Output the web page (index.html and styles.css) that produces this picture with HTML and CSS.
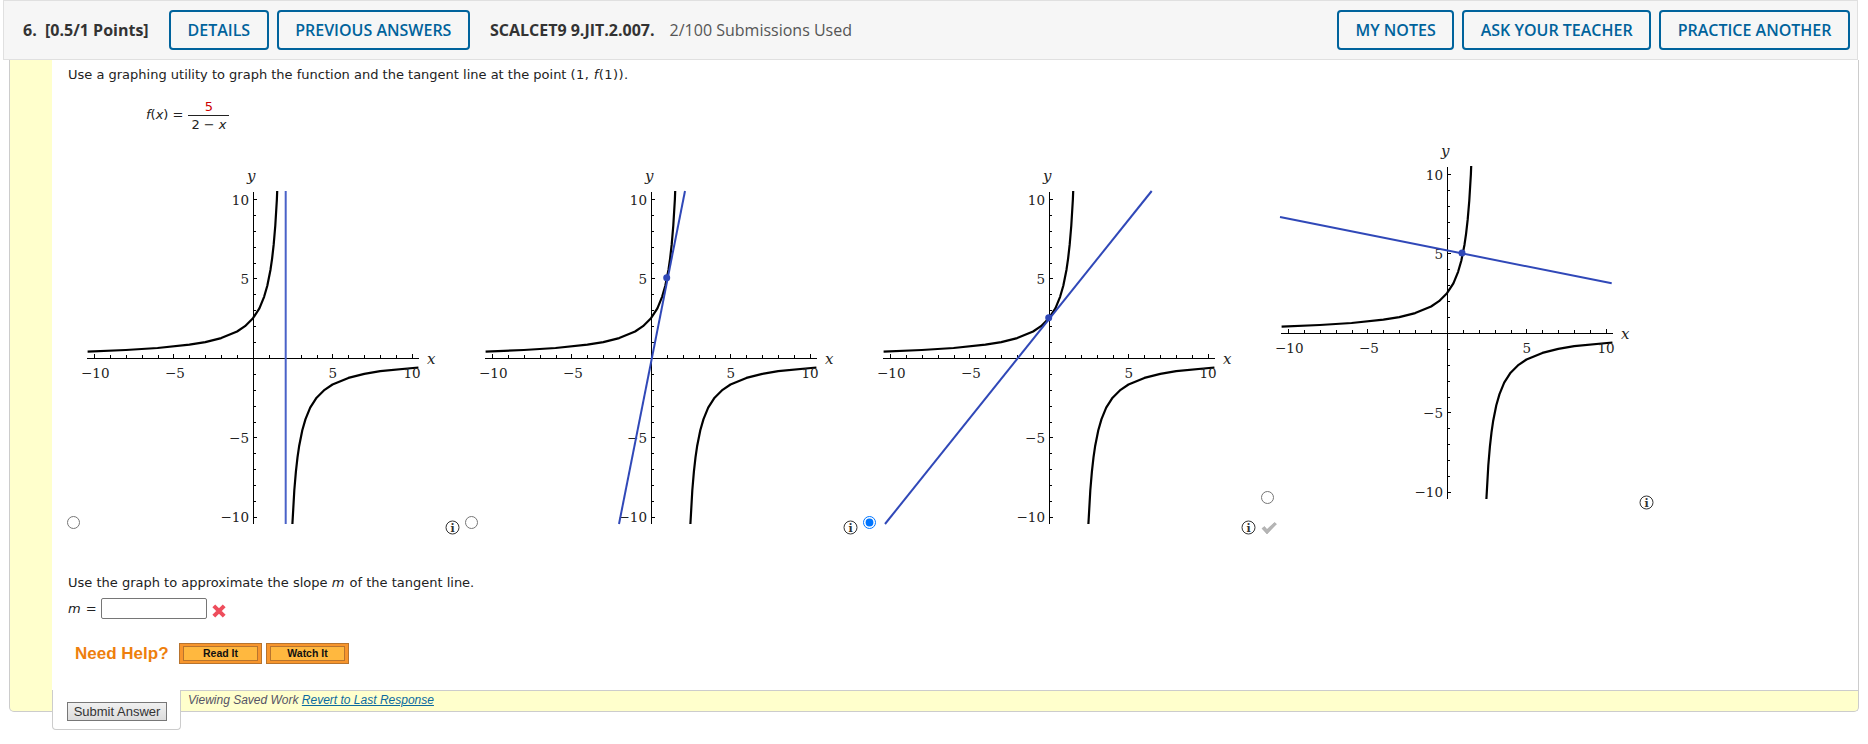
FILE: index.html
```html
<!DOCTYPE html>
<html lang="en">
<head>
    <meta charset="UTF-8">
    <meta name="viewport" content="width=device-width, initial-scale=1.0">
    <title>Question 6</title>
    <link rel="stylesheet" href="styles.css">
</head>
<body>
    <!-- shared plot: axes, tick labels and the curve -->
    <svg class="defs" width="0" height="0">
        <defs>
            <g id="plot">
                <path class="axis" d="M7 188.5H339M173.5 22V354"/>
                <path class="axis" d="M14.5 188v-4M93.5 188v-4M252.5 188v-4M332.5 188v-4M173 29.5h4M173 108.5h4M173 267.5h4M173 347.5h4"/>
                <path class="axis" d="M30.5 188v-3M46.5 188v-3M62.5 188v-3M78.5 188v-3M109.5 188v-3M125.5 188v-3M141.5 188v-3M157.5 188v-3M189.5 188v-3M205.5 188v-3M221.5 188v-3M237.5 188v-3M268.5 188v-3M284.5 188v-3M300.5 188v-3M316.5 188v-3"/>
                <path class="axis" d="M173 45.5h3M173 61.5h3M173 77.5h3M173 93.5h3M173 124.5h3M173 140.5h3M173 156.5h3M173 172.5h3M173 204.5h3M173 220.5h3M173 236.5h3M173 252.5h3M173 283.5h3M173 299.5h3M173 315.5h3M173 331.5h3"/>
                <path class="curve" d="M7.6 181.6L45.8 180L77.6 178L109.4 174.7L125.3 172.1L141.2 168.1L157.1 161.5L165 156.2L173 148.2L179.4 138.3L184.1 126.8L187.3 115.7L190.5 99.7L192.1 88.6L193.7 74.4L195.3 55.5L196.9 29L197.2 21"/>
                <path class="curve" d="M212.4 354L212.8 347L214.3 320.5L215.9 301.6L217.5 287.4L219.1 276.3L222.3 260.3L225.5 249.1L230.2 237.7L236.6 227.7L244.6 219.8L252.5 214.5L268.4 207.9L284.3 203.9L300.2 201.2L338.4 197.5"/>
                <text class="tick" x="1" y="208">−10</text>
                <text class="tick" x="85" y="208">−5</text>
                <text class="tick" x="248.5" y="208">5</text>
                <text class="tick" x="323.5" y="208">10</text>
                <text class="tick end" x="169" y="35">10</text>
                <text class="tick end" x="169" y="113.5">5</text>
                <text class="tick end" x="169" y="272.5">−5</text>
                <text class="tick end" x="169" y="352">−10</text>
                <text class="var" x="167" y="11">y</text>
                <text class="var" x="347" y="194">x</text>
            </g>
            <g id="info">
                <circle class="info-ring" cx="7.5" cy="7.5" r="6.5"/>
                <text class="info-i" x="7.5" y="12">i</text>
            </g>
        </defs>
    </svg>

    <div class="header">
        <span class="points">6.&nbsp; [0.5/1 Points]</span>
        <a class="btn btn-first">DETAILS</a>
        <a class="btn">PREVIOUS ANSWERS</a>
        <span class="code">SCALCET9 9.JIT.2.007.</span>
        <span class="used">2/100 Submissions Used</span>
        <div class="header-right">
            <a class="btn">MY NOTES</a>
            <a class="btn">ASK YOUR TEACHER</a>
            <a class="btn">PRACTICE ANOTHER</a>
        </div>
    </div>

    <div class="panel">
        <div class="question">
            <p class="prompt">Use a graphing utility to graph the function and the tangent line at the point <span class="coord">(1, <i>f</i>(1))</span>.</p>
            <div class="formula">
                <span class="fx"><i>f</i>(<i>x</i>) =</span>
                <span class="frac">
                    <span class="num">5</span>
                    <span class="den">2 − <i>x</i></span>
                </span>
            </div>

            <div class="choices">
                <label class="option">
                    <input type="radio" name="graph">
                    <svg class="graph" width="365" height="356" viewBox="0 0 365 356">
                        <use href="#plot"/>
                        <path class="tangent tangent-vert" d="M205.7 21V354"/>
                    </svg>
                    <svg class="info" width="15" height="15"><use href="#info"/></svg>
                </label>
                <label class="option">
                    <input type="radio" name="graph">
                    <svg class="graph" width="365" height="356" viewBox="0 0 365 356">
                        <use href="#plot"/>
                        <path class="tangent" d="M207 21L141 354"/>
                        <circle class="dot" cx="188.7" cy="107.7" r="3.5"/>
                    </svg>
                    <svg class="info" width="15" height="15"><use href="#info"/></svg>
                </label>
                <label class="option">
                    <input type="radio" name="graph" checked>
                    <svg class="graph" width="365" height="356" viewBox="0 0 365 356">
                        <use href="#plot"/>
                        <path class="tangent" d="M275.7 21L9 354"/>
                        <circle class="dot" cx="172.7" cy="147.7" r="3.5"/>
                    </svg>
                    <svg class="info" width="15" height="15"><use href="#info"/></svg>
                    <svg class="check" width="16" height="14" viewBox="0 0 16 14"><path d="M1 7.5L3.5 5.5L6 8.5L13.5 1.5L15.5 3L6 13Z"/></svg>
                </label>
                <label class="option option-raised">
                    <input type="radio" name="graph">
                    <svg class="graph" width="365" height="356" viewBox="0 0 365 356">
                        <use href="#plot"/>
                        <path class="tangent" d="M6 72L337.7 138.3"/>
                        <circle class="dot" cx="188" cy="108" r="3.5"/>
                    </svg>
                    <svg class="info" width="15" height="15"><use href="#info"/></svg>
                </label>
            </div>

            <p class="slope">Use the graph to approximate the slope <i class="var-m">m</i> of the tangent line.</p>
            <div class="answer">
                <span><i class="var-m">m</i> =</span>
                <input class="answer-box" type="text">
                <svg class="wrong" width="16" height="16" viewBox="0 0 16 16"><path d="M2.8 2.8L13.2 13.2M13.2 2.8L2.8 13.2"/></svg>
            </div>

            <div class="help">
                <span class="help-title">Need Help?</span>
                <a class="help-btn"><span>Read It</span></a>
                <a class="help-btn"><span>Watch It</span></a>
            </div>
        </div>

        <div class="footer">
            <div class="submit-card">
                <button class="submit">Submit Answer</button>
            </div>
            <div class="saved">Viewing Saved Work <a href="#">Revert to Last Response</a></div>
        </div>
    </div>
</body>
</html>
```

FILE: styles.css
```css
body {
    box-sizing: border-box;
    min-height: 744px;
    margin: 0;
    background: white;
    font-family: "DejaVu Sans", sans-serif;
    font-size: 13px;
    color: #222;
}
p {
    margin: 0;
}
.defs {
    position: absolute;
}

.header {
    display: flex;
    align-items: center;
    box-sizing: border-box;
    height: 60px;
    width: 1855px;
    margin-left: 3px;
    padding: 0 7px 0 19px;
    background: #f6f6f6;
    border: 1px solid #e0e0e0;
    font-family: "Open Sans", sans-serif;
    font-size: 16px;
}
.points {
    font-weight: 700;
    font-size: 16px;
    color: #333;
    width: 146px;
    white-space: nowrap;
}
.btn {
    box-sizing: border-box;
    height: 40px;
    line-height: 36px;
    padding: 0 16.5px;
    margin-right: 8px;
    border: 2px solid #00639c;
    border-radius: 4px;
    color: #00639c;
    font-weight: 600;
    white-space: nowrap;
}
.code {
    margin-left: 12px;
    font-weight: 700;
    color: #333;
}
.used {
    margin-left: 15px;
    color: #555;
}
.header-right {
    display: flex;
    margin-left: auto;
}
.header-right .btn:last-child {
    margin-right: 0;
}

.panel {
    box-sizing: border-box;
    width: 1850px;
    height: 652px;
    margin-left: 9px;
    background: #ffffcc;
    border: 1px solid #ccc;
    border-top: 0;
    border-radius: 0 0 5px 5px;
}
.question {
    box-sizing: border-box;
    height: 630px;
    margin-left: 42px;
    padding: 7px 0 0 16px;
    background: white;
}
.coord {
    letter-spacing: 0.4px;
}
.formula {
    display: flex;
    align-items: center;
    margin: 17px 0 0 78px;
    gap: 5px;
}
.fx {
    margin-top: -3px;
}
.frac {
    display: flex;
    flex-direction: column;
    align-items: center;
    width: 41px;
}
.num {
    color: #c00;
    padding-bottom: 1px;
}
.den {
    border-top: 1px solid #222;
    width: 100%;
    text-align: center;
    padding-top: 1px;
}

.choices {
    display: flex;
    margin-left: -1px;
    margin-top: 38px;
}
.option {
    display: flex;
    align-items: flex-end;
    position: relative;
    width: 398px;
    height: 366px;
}
.option input {
    margin: 0 0 7px 0;
}
.option-raised {
    margin-top: -25px;
}
.graph {
    margin-bottom: 10px;
}
.info {
    margin-bottom: 1px;
}
.info-ring {
    fill: white;
    stroke: #333;
}
.info-i {
    font-family: "DejaVu Serif", serif;
    font-size: 11px;
    font-weight: 700;
    text-anchor: middle;
    fill: #333;
}
.check {
    position: absolute;
    left: 398px;
    bottom: 1px;
    fill: #b5b5b5;
    stroke: #999;
    stroke-width: 0.5;
}

.axis {
    fill: none;
    stroke: #000;
    stroke-width: 1;
}
.curve {
    fill: none;
    stroke: #000;
    stroke-width: 2.2;
    stroke-linejoin: round;
}
.tangent {
    fill: none;
    stroke: #3048b8;
    stroke-width: 2;
}
.tangent-vert {
    stroke: #4a62c8;
}
.dot {
    fill: #3048b8;
}
.tick {
    font-family: "DejaVu Serif", serif;
    font-size: 13.5px;
    fill: #222;
}
.end {
    text-anchor: end;
}
.var {
    font-family: "DejaVu Serif", serif;
    font-size: 15px;
    font-style: italic;
    fill: #222;
}

.slope {
    margin-top: 39px;
}
.var-m {
    letter-spacing: 1px;
}
.answer {
    display: flex;
    align-items: center;
    gap: 4px;
    margin-top: 8px;
}
.answer-box {
    box-sizing: border-box;
    width: 106px;
    height: 21px;
    margin: 0;
    padding: 0;
    border: 1px solid #767676;
    border-radius: 2px;
}
.wrong {
    margin-top: 4px;
    fill: none;
    stroke: #ee4d5c;
    stroke-width: 4;
}

.help {
    display: flex;
    align-items: center;
    gap: 4px;
    margin: 24px 0 0 7px;
}
.help-title {
    width: 100px;
    font-family: "Liberation Sans", sans-serif;
    font-size: 17px;
    font-weight: 700;
    color: #ee7f0d;
}
.help-btn {
    box-sizing: border-box;
    width: 83px;
    height: 21px;
    padding: 3px;
    background: #f7952c;
    border: 1px solid #b8742e;
}
.help-btn span {
    display: block;
    height: 13px;
    line-height: 13px;
    background: #ffb83f;
    border: 1px solid #b8742e;
    margin-top: -1px;
    text-align: center;
    font-family: "Liberation Sans", sans-serif;
    font-size: 10.5px;
    font-weight: 700;
    color: #111;
}

.footer {
    display: flex;
    margin-left: 42px;
}
.submit-card {
    box-sizing: border-box;
    width: 129px;
    height: 40px;
    padding: 12px 0 0 14px;
    background: white;
    border: 1px solid #ccc;
    border-top: 0;
    border-radius: 0 0 4px 4px;
}
.submit {
    box-sizing: border-box;
    width: 100px;
    height: 19px;
    padding: 0;
    background: linear-gradient(#f0f0f0, #dcdcdc);
    border: 1px solid #777;
    font-family: "Liberation Sans", sans-serif;
    font-size: 13px;
    color: #333;
}
.saved {
    flex: 1;
    box-sizing: border-box;
    height: 21px;
    padding: 2px 0 0 7px;
    border-top: 1px solid #ccc;
    font-family: "Liberation Sans", sans-serif;
    font-size: 12px;
    font-style: italic;
    color: #556;
}
.saved a {
    color: #0b6a9f;
}
```
